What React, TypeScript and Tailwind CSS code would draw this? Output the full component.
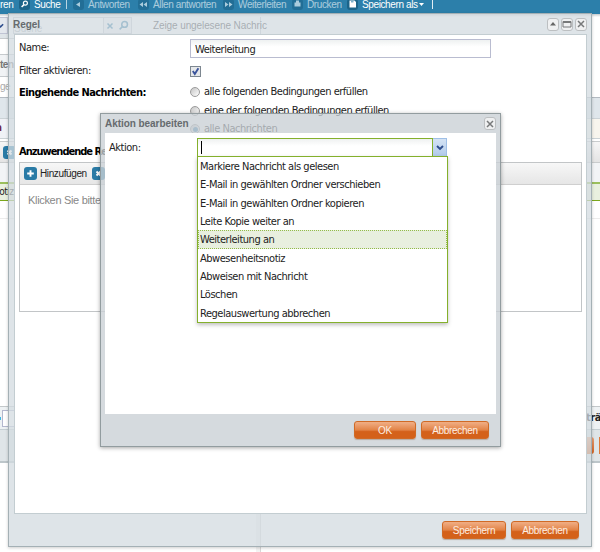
import { ReactNode } from "react";

const actions = [
  "Markiere Nachricht als gelesen",
  "E-Mail in gewählten Ordner verschieben",
  "E-Mail in gewählten Ordner kopieren",
  "Leite Kopie weiter an",
  "Weiterleitung an",
  "Abwesenheitsnotiz",
  "Abweisen mit Nachricht",
  "Löschen",
  "Regelauswertung abbrechen",
];

const selected = "Weiterleitung an";

const Button = ({ label, width }: { label: string; width: string }) => (
  <button
    className={`${width} h-[18px] shrink-0 rounded-[3px] border border-[#d06a26] bg-linear-to-b from-[#efab80] from-5% via-[#e28345] via-50% to-[#d4611a] to-60% text-center font-['Liberation_Sans',sans-serif] text-[10px] leading-[17px] tracking-[-0.3px] text-[#fdeee2] shadow-[0_1px_1px_#b9aaa0]`}
  >
    {label}
  </button>
);

interface ToolProps {
  label: string;
  width: string;
  dim?: boolean;
  children: ReactNode;
}

const Tool = ({ label, width, dim, children }: ToolProps) => (
  <div className={`${width} flex shrink-0 ${dim ? "opacity-60" : ""}`}>
    <svg viewBox="0 0 11 11" className="mt-[-1px] mr-[4px] size-[11px] shrink-0" fill="#fff">
      <rect width="11" height="11" rx="3" fill="#1c6489" />
      {children}
    </svg>
    <span className="mt-[-1px]">{label}</span>
  </div>
);

const WindowTool = ({ children }: { children: ReactNode }) => (
  <span className="flex h-[13px] w-[12px] items-center justify-center rounded-[3px] border border-[#bcbfc1] bg-[#eff0f1]">
    <svg viewBox="0 0 10 10" className="size-[10px] shrink-0" fill="none" stroke="#77797a" strokeWidth="1.5">
      {children}
    </svg>
  </span>
);

const closeIcon = <path d="M2 2l6 6M8 2L2 8" />;

const Radio = ({ label, checked }: { label: string; checked?: boolean }) => (
  <div className="flex h-[18.5px] items-center">
    <span className="mr-[4px] flex size-[10px] items-center justify-center rounded-full border border-[#9b9b9b] bg-linear-to-br from-[#c4c4c4] to-white">
      {checked && <span className="size-[5px] rounded-full bg-[#3a7fae]" />}
    </span>
    {label}
  </div>
);

const SmallIcon = ({ close }: { close?: boolean }) => (
  <svg viewBox="0 0 13 13" className="size-[13px] shrink-0">
    <rect width="13" height="13" rx="3" fill="#2a7ba6" />
    <path
      d={close ? "M4.5 4.5l4 4M8.5 4.5l-4 4" : "M6.5 3.2v6.6M3.2 6.5h6.6"}
      stroke="#fff"
      strokeWidth="1.9"
    />
  </svg>
);

const Toolbar = () => (
  <div className="flex h-[14px] shrink-0 items-start bg-[#2c7faa] font-['Liberation_Sans',sans-serif] text-[10px] leading-[12px] tracking-[-0.38px] text-white">
    <span className="mt-[-1px] w-[19px]">ren</span>
    <Tool label="Suche" width="w-[47px]">
      <circle cx="6.4" cy="4.2" r="2" fill="none" stroke="#fff" strokeWidth="1.2" />
      <path d="M5 5.6L2.6 8" stroke="#fff" strokeWidth="1.5" />
    </Tool>
    <span className="mr-[6px] h-[9px] w-px bg-[#b9d5e3]" />
    <Tool label="Antworten" width="w-[65px]" dim>
      <path d="M3 5.5l4-2.5v5z" />
    </Tool>
    <Tool label="Allen antworten" width="w-[85px]" dim>
      <path d="M1.5 5.5L5 3v5zM5.5 5.5L9 3v5z" />
    </Tool>
    <Tool label="Weiterleiten" width="w-[69px]" dim>
      <path d="M5.5 5.5L2 3v5zM9.5 5.5L6 3v5z" />
    </Tool>
    <Tool label="Drucken" width="w-[55px]" dim>
      <path d="M4 1.5h3v2h1.5v4h-6v-4H4z" />
    </Tool>
    <Tool label="Speichern als" width="w-[72px]">
      <path d="M2.5 1.5h5l1.5 1.5v5.5h-6.5z" />
      <path d="M4 1.5h2.5v2h-2.5z" fill="#7fb0ca" />
    </Tool>
    <svg viewBox="0 0 5 3" className="mt-[3px] mr-[8px] h-[3px] w-[5px]" fill="#fff">
      <path d="M0 0h5L2.5 3z" />
    </svg>
    <span className="h-[9px] w-px bg-[#e3eef4]" />
  </div>
);

// mail client that lies behind the dialogs
const Background = () => (
  <div className="flex h-[552px] w-[600px] flex-col overflow-hidden">
    <Toolbar />
    <div className="h-[3px] shrink-0 bg-linear-to-b from-[#c4c9cc] to-white" />
    <div className="flex h-[17px] shrink-0 font-['Liberation_Sans',sans-serif] text-[10px] leading-[18px] tracking-normal">
      <div className="flex w-[8px] items-center border-y border-r border-[#c0c4d4] bg-[#e4e8ee]">
        <svg viewBox="0 0 8 8" className="ml-[-3px] size-[7px]" fill="none" stroke="#2d4c8c" strokeWidth="1.8">
          <path d="M1 2.5l3 3 3-3" />
        </svg>
      </div>
      <div className="ml-[5px] w-[91px] border border-[#c3c8cd] leading-[21px] text-[#a7adb2]">Suche</div>
      <div className="flex w-[28px] items-center justify-around border-y border-r border-[#c3c8cd] bg-[#f1f4f7]">
        <svg viewBox="0 0 8 8" className="size-[8px]" fill="none" stroke="#1f6f9e" strokeWidth="1.5">
          <path d="M1.5 1.5l5 5M6.5 1.5l-5 5" />
        </svg>
        <svg viewBox="0 0 10 10" className="size-[11px]" fill="none" stroke="#1f6f9e" strokeWidth="1.4">
          <circle cx="6" cy="4" r="2.6" />
          <path d="M4 6L1.5 8.5" />
        </svg>
      </div>
      <div className="ml-[21px] w-[108px] border-r border-[#c3c8cd] tracking-[-0.1px] whitespace-nowrap text-[#1b2227]">
        Zeige ungelesene Nachric
      </div>
    </div>
    <div className="h-[4px] w-[8px] shrink-0 bg-[#dfe5e9]" />
    <div className="h-[17px] w-[14px] shrink-0 border-y border-[#c6cacd]" />
    <div className="h-[21px] w-[14px] shrink-0 bg-[#f1f3f5] font-['Liberation_Sans',sans-serif] text-[10px] leading-[20px] font-bold text-[#777]">
      ten
    </div>
    <div className="h-[21px] w-[14px] shrink-0 overflow-hidden border-t border-[#c6cacd] font-['Liberation_Sans',sans-serif] text-[10px] leading-[19px] text-[#aaa]">
      ge
    </div>
    <div className="h-[21px] shrink-0 border-t border-[#b3bac1] bg-[#dfe6eb]" />
    <div className="flex h-[20px] shrink-0 justify-between border-t border-[#cbd2d6] bg-[#f0f2f6]">
      <span className="ml-[-5px] text-[11px] leading-[18px] font-bold text-[#732649]">n</span>
      <span className="w-[14px] bg-[#f8f5ee]" />
    </div>
    <div className="h-[3px] shrink-0 border-t border-[#cbd2d6] bg-white" />
    <div className="flex h-[22px] shrink-0 items-center border-y border-[#c9cccd] bg-linear-to-b from-[#f6f6f6] to-[#e4e4e4] pl-[3px]">
      <SmallIcon close />
    </div>
    <div className="h-[19px] shrink-0 bg-[#f2f4f6]" />
    <div className="h-[19px] shrink-0 border-t-2 border-b border-t-[#9bbf5c] border-b-[#7ba71c] bg-[#e9f0df] text-[10px] leading-[16px]">
      <span className="ml-[-6px]">notiz</span>
    </div>
    <div className="h-[206px] shrink-0 border-b border-[#c3c8ca]">
      <div className="h-[18px] border-b border-[#ececec]" />
    </div>
    <div className="flex h-[23px] shrink-0 items-center justify-between border-b border-[#c5cfd3] bg-[#eef2f4]">
      <span className="h-[3px] w-px bg-[#3fb7e4]" />
      <span className="ml-px h-[17px] w-[14px] border border-[#b4b8ce] bg-white" />
      <span className="mr-[-1px] ml-auto text-[11px] leading-[20px] font-semibold">trä</span>
    </div>
    <div className="flex h-[33px] shrink-0 justify-end gap-[5px] border-b-2 border-[#bdc6ca] bg-[#dfe5e8] pt-[7px]">
      <span className="h-[17px] w-[30px] rounded-r-[3px] bg-linear-to-b from-[#e9a176] to-[#d4611a]" />
      <span className="h-[17px] w-px bg-[#dd7a3c]" />
    </div>
    <div className="ml-[256px] w-[5px] grow border-r border-[#d8d8d8] bg-[#f3f3f3]" />
  </div>
);

const RuleWindow = () => (
  <div className="absolute top-[13px] left-[8px] flex h-[534px] w-[584px] flex-col border border-[#a4b0b5] bg-[#d3dbe0]/75 pr-[4px] pl-[5px] shadow-[0_1px_3px_rgba(0,0,0,0.2)]">
    <div className="flex h-[20px] shrink-0 items-center justify-between">
      <span className="ml-[-1px] font-['Liberation_Sans',sans-serif] text-[10px] font-bold tracking-[-0.05px] text-[#666b6e]">
        Regel
      </span>
      <div className="flex gap-[2px]">
        <WindowTool>
          <path d="M2 6.5h6L5 3z" fill="#666" stroke="none" />
        </WindowTool>
        <WindowTool>
          <path d="M1 2.5h8v5.5h-8zM1 3.5h8" strokeWidth="1" />
        </WindowTool>
        <WindowTool>{closeIcon}</WindowTool>
      </div>
    </div>
    <div className="flex h-[480px] shrink-0 flex-col border border-[#c3cdd1] bg-white px-[4px] pt-[4px]">
      <div className="flex h-[19px] items-center">
        <span className="w-[171px]">Name:</span>
        <input
          className="h-[19px] w-[301px] border border-[#b9bcd0] bg-linear-to-b from-[#eef1f1] to-white to-40% px-[4px] pt-[2px]"
          defaultValue="Weiterleitung"
        />
      </div>
      <div className="mt-[3px] flex h-[21px] items-center">
        <span className="w-[171px]">Filter aktivieren:</span>
        <svg viewBox="0 0 11 11" className="size-[11px]" fill="none">
          <rect x=".5" y=".5" width="10" height="10" fill="#e6e8ea" stroke="#7d8790" />
          <path d="M2.8 5l2 3 3.6-5.8" stroke="#3c559c" strokeWidth="1.9" />
        </svg>
      </div>
      <div className="mt-px flex">
        <span className="w-[171px] leading-[19px] font-bold tracking-[-0.6px] text-black">
          Eingehende Nachrichten:
        </span>
        <div>
          <Radio label="alle folgenden Bedingungen erfüllen" />
          <Radio label="eine der folgenden Bedingungen erfüllen" />
          <Radio label="alle Nachrichten" checked />
        </div>
      </div>
      <div className="mt-[3px] h-[20.5px] leading-[20px] font-bold tracking-[-1px] text-black">
        Anzuwendende Re
      </div>
      <div className="h-[150px] w-[563px] shrink-0 border border-[#c2c5c7] font-['Liberation_Sans',sans-serif]">
        <div className="flex h-[22px] items-center border-b border-[#cfcfcf] bg-linear-to-b from-[#f7f7f7] to-[#e6e6e6] pl-[4px] text-[10px] tracking-[-0.38px]">
          <SmallIcon />
          <span className="mr-[6px] ml-[3px] w-[46px]">Hinzufügen</span>
          <SmallIcon close />
        </div>
        <div className="pt-[7px] pl-[8px] text-[11px] whitespace-nowrap tracking-[-0.32px] text-[#888]">
          Klicken Sie bitte
        </div>
      </div>
    </div>
    <div className="flex grow items-center justify-end gap-[5px] pr-[8px]">
      <Button label="Speichern" width="w-[64px]" />
      <Button label="Abbrechen" width="w-[68px]" />
    </div>
  </div>
);

const ActionWindow = () => (
  <div className="absolute top-[113px] left-[100px] flex h-[334px] w-[401px] flex-col border border-[#929c9f] bg-[#c9d0d5]/78 px-[4px] shadow-[0_1px_4px_rgba(0,0,0,0.35)]">
    <div className="flex h-[19px] shrink-0 items-center justify-between">
      <span className="font-['Liberation_Sans',sans-serif] text-[10px] font-bold tracking-[-0.05px] text-[#666b6e]">
        Aktion bearbeiten
      </span>
      <WindowTool>{closeIcon}</WindowTool>
    </div>
    <div className="h-[281px] shrink-0 bg-white pt-[5px] pl-[4px]">
      <div className="flex">
        <span className="w-[88px] leading-[19px]">Aktion:</span>
        <div className="relative flex h-[19px] w-[250px]">
          <div className="w-[236px] border border-[#84b02c] bg-linear-to-b from-[#eff1f1] to-white to-40% py-[2px] pl-[3px]">
            <div className="h-[13px] w-px bg-black" />
          </div>
          <div className="flex w-[14px] items-center justify-center border-t border-r border-[#9fbfe6] bg-linear-to-b from-[#d4e3f4] to-[#afc9ea]">
            <svg viewBox="0 0 8 8" className="size-[8px]" fill="none" stroke="#2d4c8c" strokeWidth="1.9">
              <path d="M1 2l3 3 3-3" />
            </svg>
          </div>
          <div className="absolute top-[18px] left-0 w-[251px] border border-[#84b02c] bg-white shadow-[0_2px_4px_rgba(0,0,0,0.25)]">
            {actions.map((action) => (
              <div
                key={action}
                className={
                  action === selected
                    ? "h-[18.33px] border border-dotted border-[#93bb49] bg-[#e8efdf] pl-[1px] leading-[18px]"
                    : "h-[18.33px] pl-[2px] leading-[20px]"
                }
              >
                {action}
              </div>
            ))}
          </div>
        </div>
      </div>
    </div>
    <div className="flex grow items-center justify-end gap-[5px] pr-[7px]">
      <Button label="OK" width="w-[62px]" />
      <Button label="Abbrechen" width="w-[68px]" />
    </div>
  </div>
);

const App = () => (
  <div className="relative h-[552px] w-[600px] overflow-hidden bg-white font-['DejaVu_Sans_Condensed','DejaVu_Sans',sans-serif] text-[11px] tracking-[-0.47px] text-[#222]">
    <Background />
    <RuleWindow />
    <ActionWindow />
  </div>
);

export default App;
